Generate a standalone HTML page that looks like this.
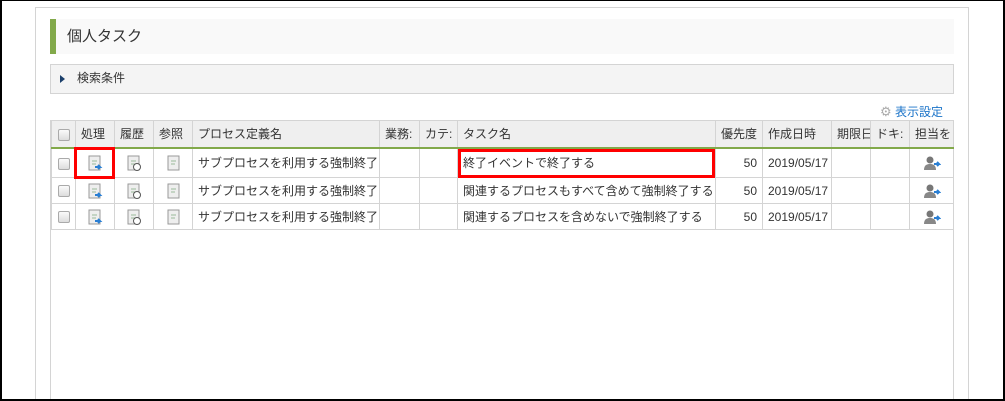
<!DOCTYPE html>
<html><head><meta charset="utf-8"><style>
*{box-sizing:border-box;margin:0;padding:0}
html,body{width:1005px;height:401px;overflow:hidden}
body{background:#fff;font-family:"Liberation Sans","Noto Sans CJK JP",sans-serif;font-size:12px;color:#333;position:relative}
.frame{position:absolute;left:0;top:0;width:1005px;height:401px;border:2px solid #000;border-top-width:1px;z-index:5}
.panel{position:absolute;left:35px;top:7px;width:934px;height:394px;border:1px solid #d4d4d4;border-bottom:none}
.title{position:absolute;left:50px;top:19px;width:904px;height:35px;background:#f9f9f9;border-left:6px solid #82a94a;font-size:15px;line-height:35px;padding-left:11px;color:#333}
.search{position:absolute;left:50px;top:64px;width:904px;height:30px;background:#f4f4f4;border:1px solid #d4d4d4;line-height:27px;padding-left:26px;font-size:12px}
.search:before{content:"";position:absolute;left:9px;top:10px;border-left:5px solid #1b3f6b;border-top:4px solid transparent;border-bottom:4px solid transparent}
.disp{position:absolute;left:880px;top:103px;color:#1a73c8;font-size:12px}
.grid{position:absolute;left:50px;top:120px;width:904px;height:281px;border:1px solid #d4d4d4;border-top:none;border-bottom:none}
table{position:absolute;left:51px;top:120px;border-collapse:collapse;table-layout:fixed;width:902px}
td,th{border:1px solid #d4d4d4;white-space:nowrap;overflow:hidden;font-weight:normal;text-align:left;padding:0 5px}
th{background:#efefef;height:27px;border-bottom:2px solid #82a94a}
td{height:26px}
tr.r1 td{height:30px}
.c{text-align:center;padding:0}
.r{text-align:right}
.cb{display:inline-block;width:12px;height:12px;border:1px solid #aaa;border-radius:2px;background:linear-gradient(#fafafa,#dcdcdc);vertical-align:middle}
svg{vertical-align:middle}
.red1{position:absolute;left:74px;top:147px;width:41px;height:32px;border:3px solid #f00}
.red2{position:absolute;left:458px;top:149px;width:257px;height:29px;border:3px solid #f00}
</style></head><body>
<div class="panel"></div>
<div class="title">個人タスク</div>
<div class="search">検索条件</div>
<div class="disp"><span style="color:#aaa;font-size:13px">⚙</span> 表示設定</div>
<div class="grid"></div>
<table>
<colgroup><col style="width:24px"><col style="width:39px"><col style="width:39px"><col style="width:39px"><col style="width:187px"><col style="width:40px"><col style="width:38px"><col style="width:258px"><col style="width:47px"><col style="width:69px"><col style="width:39px"><col style="width:39px"><col style="width:44px"></colgroup>
<tr><th class="c"><span class="cb"></span></th><th>処理</th><th>履歴</th><th>参照</th><th>プロセス定義名</th><th>業務:</th><th>カテ:</th><th>タスク名</th><th>優先度</th><th>作成日時</th><th>期限日</th><th>ドキ:</th><th>担当を</th></tr>
<tr class="r1"><td class="c"><span class="cb"></span></td>
<td class="c"><svg width="16" height="16"><rect x="2" y="1" width="11" height="14" fill="#eee" stroke="#999"/><path d="M5 6h5M5 9h4" stroke="#9b9" /><path d="M8 12h5l-2-2M13 12l-2 2" stroke="#2a7fd4" stroke-width="2" fill="none"/></svg></td>
<td class="c"><svg width="16" height="16"><rect x="2" y="1" width="11" height="14" fill="#eee" stroke="#999"/><path d="M5 6h5M5 9h4" stroke="#9b9"/><circle cx="11" cy="12" r="3.5" fill="#fff" stroke="#555"/></svg></td>
<td class="c"><svg width="16" height="16"><rect x="3" y="1" width="11" height="14" fill="#eee" stroke="#999"/><path d="M6 6h5M6 9h4" stroke="#9b9"/></svg></td>
<td>サブプロセスを利用する強制終了</td><td></td><td></td><td>終了イベントで終了する</td><td class="r">50</td><td>2019/05/17</td><td></td><td></td>
<td class="c"><svg width="18" height="16"><circle cx="7" cy="5" r="3.5" fill="#777"/><path d="M1 15c0-5 3-6 6-6s6 1 6 6z" fill="#888"/><path d="M11 9h5l-2-2M16 9l-2 2" stroke="#2a7fd4" stroke-width="2" fill="none"/></svg></td></tr>
<tr><td class="c"><span class="cb"></span></td>
<td class="c"><svg width="16" height="16"><rect x="2" y="1" width="11" height="14" fill="#eee" stroke="#999"/><path d="M5 6h5M5 9h4" stroke="#9b9" /><path d="M8 12h5l-2-2M13 12l-2 2" stroke="#2a7fd4" stroke-width="2" fill="none"/></svg></td>
<td class="c"><svg width="16" height="16"><rect x="2" y="1" width="11" height="14" fill="#eee" stroke="#999"/><path d="M5 6h5M5 9h4" stroke="#9b9"/><circle cx="11" cy="12" r="3.5" fill="#fff" stroke="#555"/></svg></td>
<td class="c"><svg width="16" height="16"><rect x="3" y="1" width="11" height="14" fill="#eee" stroke="#999"/><path d="M6 6h5M6 9h4" stroke="#9b9"/></svg></td>
<td>サブプロセスを利用する強制終了</td><td></td><td></td><td>関連するプロセスもすべて含めて強制終了する</td><td class="r">50</td><td>2019/05/17</td><td></td><td></td>
<td class="c"><svg width="18" height="16"><circle cx="7" cy="5" r="3.5" fill="#777"/><path d="M1 15c0-5 3-6 6-6s6 1 6 6z" fill="#888"/><path d="M11 9h5l-2-2M16 9l-2 2" stroke="#2a7fd4" stroke-width="2" fill="none"/></svg></td></tr>
<tr><td class="c"><span class="cb"></span></td>
<td class="c"><svg width="16" height="16"><rect x="2" y="1" width="11" height="14" fill="#eee" stroke="#999"/><path d="M5 6h5M5 9h4" stroke="#9b9" /><path d="M8 12h5l-2-2M13 12l-2 2" stroke="#2a7fd4" stroke-width="2" fill="none"/></svg></td>
<td class="c"><svg width="16" height="16"><rect x="2" y="1" width="11" height="14" fill="#eee" stroke="#999"/><path d="M5 6h5M5 9h4" stroke="#9b9"/><circle cx="11" cy="12" r="3.5" fill="#fff" stroke="#555"/></svg></td>
<td class="c"><svg width="16" height="16"><rect x="3" y="1" width="11" height="14" fill="#eee" stroke="#999"/><path d="M6 6h5M6 9h4" stroke="#9b9"/></svg></td>
<td>サブプロセスを利用する強制終了</td><td></td><td></td><td>関連するプロセスを含めないで強制終了する</td><td class="r">50</td><td>2019/05/17</td><td></td><td></td>
<td class="c"><svg width="18" height="16"><circle cx="7" cy="5" r="3.5" fill="#777"/><path d="M1 15c0-5 3-6 6-6s6 1 6 6z" fill="#888"/><path d="M11 9h5l-2-2M16 9l-2 2" stroke="#2a7fd4" stroke-width="2" fill="none"/></svg></td></tr>
</table>
<div class="red1"></div><div class="red2"></div>
<div class="frame"></div>
</body></html>
